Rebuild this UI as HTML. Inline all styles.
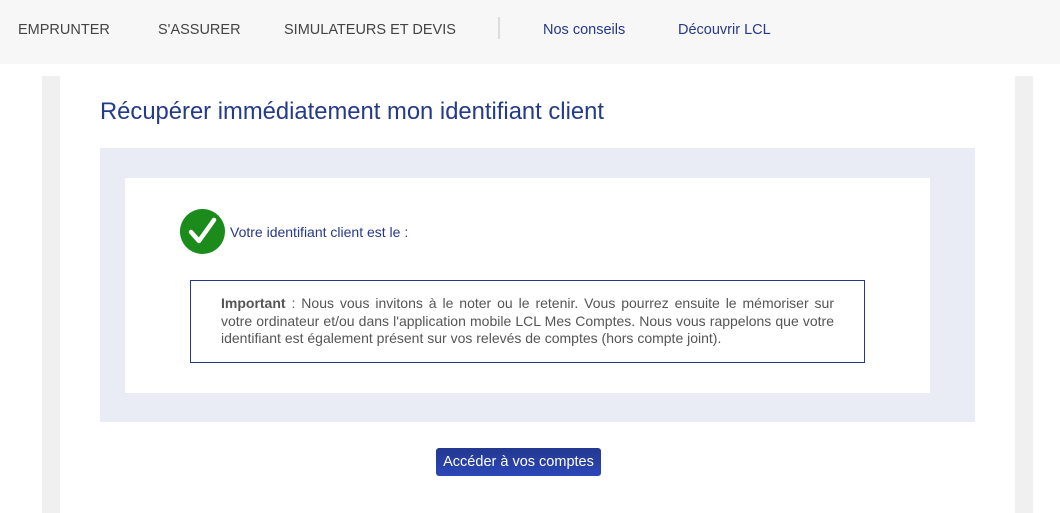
<!DOCTYPE html>
<html><head><meta charset="utf-8"><style>
*{margin:0;padding:0;box-sizing:border-box}
body{width:1060px;height:513px;overflow:hidden;background:#fff;font-family:"Liberation Sans",Arial,sans-serif;position:relative}
.hdr{position:absolute;left:0;top:0;width:1060px;height:64px;background:#f7f7f7}
.nav{position:absolute;top:22px;font-size:14.5px;color:#444;letter-spacing:0}
.nav.b{color:#26388a}
.sep{position:absolute;left:498px;top:17px;width:2px;height:22px;background:#ddd}
.side{position:absolute;top:76px;width:18px;height:437px;background:#f0f0f0}
h1{position:absolute;left:100px;top:98px;font-size:23.8px;font-weight:normal;color:#243a8a;white-space:nowrap}
.panel{position:absolute;left:100px;top:148px;width:875px;height:274px;background:#e9ecf4}
.inner{position:absolute;left:125px;top:178px;width:805px;height:215px;background:#fff}
.chk{position:absolute;left:180px;top:209px;width:45px;height:45px;border-radius:50%;background:#1b8c1b}
.lbl{position:absolute;left:230px;top:224px;font-size:14px;color:#26388a}
.box{position:absolute;left:190px;top:280px;width:675px;height:83px;border:1px solid #26388a}
.box p{position:absolute;left:30px;top:14px;width:613px;font-size:14px;line-height:17.5px;color:#555;text-align:justify}
.btn{position:absolute;left:436px;top:448px;width:165px;height:28px;border-radius:3px;background:linear-gradient(#233890,#2c47b8);color:#fff;font-size:14.5px;text-align:center;line-height:29px}
</style></head><body>
<div class="hdr">
<span class="nav" style="left:18px">EMPRUNTER</span>
<span class="nav" style="left:158px">S'ASSURER</span>
<span class="nav" style="left:284px">SIMULATEURS ET DEVIS</span>
<div class="sep"></div>
<span class="nav b" style="left:543px">Nos conseils</span>
<span class="nav b" style="left:678px">Découvrir LCL</span>
</div>
<div class="side" style="left:42px"></div>
<div class="side" style="left:1015px"></div>
<h1>Récupérer immédiatement mon identifiant client</h1>
<div class="panel"></div>
<div class="inner"></div>
<div class="chk"><svg width="45" height="45" viewBox="0 0 45 45"><path d="M11 23 L19 32 L34 11" fill="none" stroke="#fff" stroke-width="4.5" stroke-linecap="round" stroke-linejoin="round"/></svg></div>
<div class="lbl">Votre identifiant client est le :</div>
<div class="box"><p><b>Important</b> : Nous vous invitons à le noter ou le retenir. Vous pourrez ensuite le mémoriser sur votre ordinateur et/ou dans l'application mobile LCL Mes Comptes. Nous vous rappelons que votre identifiant est également présent sur vos relevés de comptes (hors compte joint).</p></div>
<div class="btn">Accéder à vos comptes</div>
</body></html>
